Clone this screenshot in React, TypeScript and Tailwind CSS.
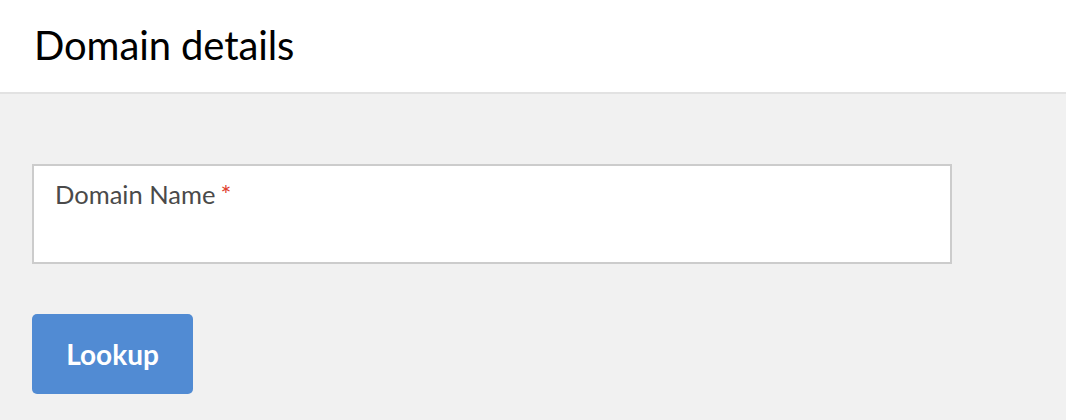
export default function App() {
  return (
    <div className="min-h-[420px] bg-[#f1f1f1] font-['Lato',sans-serif]">
      <header className="h-[94px] border-b-2 border-[#e2e2e2] bg-white px-[34px] flex items-center">
        <h1 className="text-[40px] leading-none text-black pb-[3px] tracking-[-0.1px]">Domain details</h1>
      </header>
      <main className="px-8 pt-[70px]">
        <div className="w-[920px] h-[100px] border-2 border-[#cccccc] bg-white px-[21px] pt-[12px]">
          <label className="text-[25.5px] leading-[32px] text-[#4a4a4a]">
            Domain Name<span className="ml-[5px] text-[#e0402e]">*</span>
          </label>
        </div>
        <button className="mt-[50px] w-[161px] h-[80px] rounded-[5px] bg-[#518bd3] text-white text-[28px] font-bold">
          Lookup
        </button>
      </main>
    </div>
  )
}
